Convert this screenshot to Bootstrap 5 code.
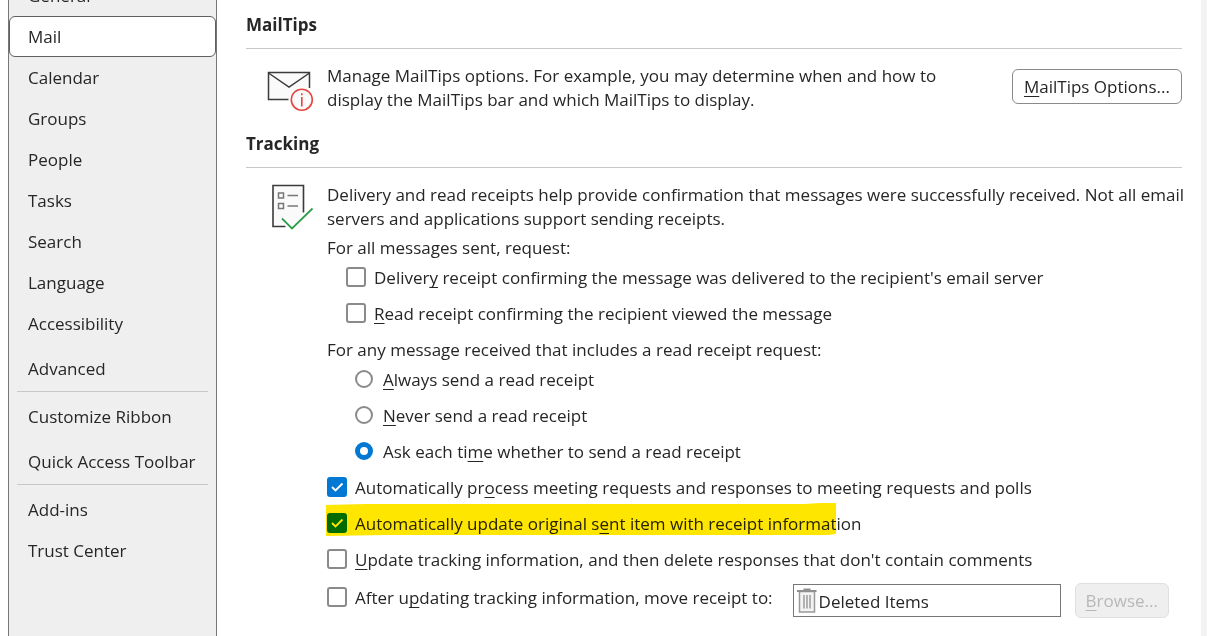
<!DOCTYPE html>
<html lang="en">
<head>
<meta charset="utf-8">
<meta name="viewport" content="width=device-width, initial-scale=1">
<title>Outlook Options</title>
<link href="https://cdn.jsdelivr.net/npm/bootstrap@5.3.0/dist/css/bootstrap.min.css" rel="stylesheet">
<style>
  body { font-family: "Open Sans", "Noto Sans", sans-serif; font-size: 17px; line-height: 24px; color: #262626; background: #fff; }
  u { text-decoration-thickness: 1px; text-underline-offset: 3px; text-decoration-skip-ink: none; }
  .options-dialog { height: 100vh; border-right: 6px solid #f3f3f3; }
  .side-menu { width: 209px; margin-left: 8px; background: #efefef; border: solid #777; border-width: 0 1px; }
  .side-menu .nav { margin-top: -25px; }
  .side-menu .nav-link { height: 41px; padding: 8px 18px 7px; border: 1px solid transparent; border-radius: 6px; color: #262626; white-space: nowrap; }
  .side-menu .nav-link.active { background: #fff; border-color: #606060; }
  .side-menu hr { margin: 2px 8px 4px; border-color: #c8c8c8; opacity: 1; }
  .option-pane { min-width: 0; padding: 0 19px 0 29px; }
  .group-title { font-size: 17px; font-weight: 700; line-height: 24px; margin: 0; padding: 13px 0 11px; border-bottom: 1px solid #c8c8c8; }
  .group-title.second { padding-top: 18px; }
  .group-body { padding-top: 15px; }
  .group-icon { width: 81px; padding-left: 20px; }
  .group-text { min-width: 0; }
  .intro { margin-bottom: 5px; white-space: nowrap; }
  .check-set { padding-left: 19px; }
  .sub-heading { padding-top: 6px; }
  .option-row { min-height: 36px; padding: 0; margin: 0; gap: 8px; }
  .option-row .form-check-input { width: 20px; height: 20px; margin: 0 0 2px; border: 2px solid #8a8a8a; border-radius: 3px; float: none; background-color: #fff; }
  .option-row .form-check-input[type=radio] { width: 18px; height: 18px; border-radius: 50%; }
  .option-row .form-check-input:checked { border-color: #0078d4; background-color: #0078d4; }
  .option-row .form-check-input[type=checkbox]:checked { background-image: url("data:image/svg+xml,%3csvg xmlns='http://www.w3.org/2000/svg' viewBox='0 0 16 16'%3e%3cpath fill='none' stroke='%23fff' stroke-width='1.9' d='M3 8l3.500 3.500L13.500 4.500'/%3e%3c/svg%3e"); background-size: 16px; }
  .option-row .form-check-input[type=radio]:checked { background: #fff; border-width: 5px; }
  .radio-set { padding-left: 28px; }
  .radio-set .option-row { gap: 10px; }
  .marked { position: relative; }
  .marker { position: absolute; left: -1px; top: -4px; width: 510px; height: 35px; mix-blend-mode: multiply; pointer-events: none; }
  .dialog-btn { height: 35px; padding: 0 11px; font-size: 17px; line-height: 24px; color: #262626; background: #fff; border: 1px solid #8a8a8a; border-radius: 6px; white-space: nowrap; }
  .dialog-btn:disabled { padding: 0 10px; color: #b8b8b8; background: #efefef; border-color: #e0e0e0; opacity: 1; }
  .btn-holder { padding-top: 5px; }
  .move-row { padding-top: 5px; gap: 14px; }
  .move-row .option-row { min-height: 30px; margin-right: 6px; }
  .folder-box { width: 268px; height: 33px; margin-top: 1px; border: 1px solid #777; padding-left: 3px; }
  .folder-box input { border: 0; padding: 2px 0 0 2px; min-width: 0; color: #262626; background: transparent; outline: 0; }
</style>
</head>
<body>
<div class="options-dialog d-flex overflow-hidden">
  <aside class="side-menu flex-shrink-0">
    <nav class="nav flex-column flex-nowrap" aria-label="Options">
      <a class="nav-link" href="#">General</a>
      <a class="nav-link active" href="#" aria-current="page">Mail</a>
      <a class="nav-link" href="#">Calendar</a>
      <a class="nav-link" href="#">Groups</a>
      <a class="nav-link" href="#">People</a>
      <a class="nav-link" href="#">Tasks</a>
      <a class="nav-link" href="#">Search</a>
      <a class="nav-link" href="#">Language</a>
      <a class="nav-link" href="#">Accessibility</a>
      <a class="nav-link mt-1" href="#">Advanced</a>
      <hr>
      <a class="nav-link" href="#">Customize Ribbon</a>
      <a class="nav-link mt-1" href="#">Quick Access Toolbar</a>
      <hr>
      <a class="nav-link" href="#">Add-ins</a>
      <a class="nav-link" href="#">Trust Center</a>
    </nav>
  </aside>
  <main class="option-pane flex-grow-1">
    <section>
      <h2 class="group-title">MailTips</h2>
      <div class="group-body d-flex">
        <div class="group-icon flex-shrink-0">
          <svg class="d-block" width="50" height="50" viewBox="0 0 50 50" fill="none" aria-hidden="true">
            <path d="M2.5 9h41v27h-41z" fill="#fafafa"/>
            <path d="M22.500 35.500h-20v-27h41v15.500" stroke="#3b3b3b" stroke-width="1.500"/>
            <path d="M2.500 9 23 23 43.500 9" stroke="#3b3b3b" stroke-width="1.500"/>
            <circle cx="35.800" cy="35.700" r="12.500" fill="#fff"/>
            <circle cx="35.800" cy="35.700" r="10.500" fill="#fafafa" stroke="#e8433f" stroke-width="1.600"/>
            <path d="M35.800 33v9.500M35.800 29.200v2" stroke="#e8433f" stroke-width="1.600"/>
          </svg>
        </div>
        <div class="group-text flex-grow-1">Manage MailTips options. For example, you may determine when and how to<br>display the MailTips bar and which MailTips to display.</div>
        <div class="btn-holder flex-shrink-0"><button type="button" class="btn dialog-btn"><u>M</u>ailTips Options...</button></div>
      </div>
    </section>
    <section>
      <h2 class="group-title second">Tracking</h2>
      <div class="group-body d-flex">
        <div class="group-icon flex-shrink-0">
          <svg class="d-block" width="50" height="50" viewBox="0 0 50 50" fill="none" aria-hidden="true">
            <path d="M7 3h30v41H7z" fill="#fafafa"/>
            <path d="M19.500 43.500H7v-41h30.500v27" stroke="#3b3b3b" stroke-width="1.600"/>
            <path d="M12.500 10h5v5h-5zM12.500 20.500h5v5h-5zM21.500 12.500H32M21.500 23H32" stroke="#777" stroke-width="1.500"/>
            <path d="M16 35.500 26 45.500 46.500 25.500" stroke="#fff" stroke-width="5"/>
            <path d="M16 35.500 26 45.500 46.500 25.500" stroke="#2f9e4b" stroke-width="1.800"/>
          </svg>
        </div>
        <div class="group-text flex-grow-1">
          <div class="intro">Delivery and read receipts help provide confirmation that messages were successfully received. Not all email<br>servers and applications support sending receipts.</div>
          <div>For all messages sent, request:</div>
          <div class="check-set">
            <div class="form-check option-row d-flex align-items-center"><input class="form-check-input" type="checkbox" id="delivery"><label for="delivery">Deliver<u>y</u> receipt confirming the message was delivered to the recipient's email server</label></div>
            <div class="form-check option-row d-flex align-items-center"><input class="form-check-input" type="checkbox" id="read"><label for="read"><u>R</u>ead receipt confirming the recipient viewed the message</label></div>
          </div>
          <div class="sub-heading">For any message received that includes a read receipt request:</div>
          <div class="radio-set">
            <div class="form-check option-row d-flex align-items-center"><input class="form-check-input" type="radio" name="reply" id="always"><label for="always"><u>A</u>lways send a read receipt</label></div>
            <div class="form-check option-row d-flex align-items-center"><input class="form-check-input" type="radio" name="reply" id="never"><label for="never"><u>N</u>ever send a read receipt</label></div>
            <div class="form-check option-row d-flex align-items-center"><input class="form-check-input" type="radio" name="reply" id="ask" checked><label for="ask">Ask each ti<u>m</u>e whether to send a read receipt</label></div>
          </div>
          <div class="form-check option-row d-flex align-items-center"><input class="form-check-input" type="checkbox" id="process" checked><label for="process">Automatically pr<u>o</u>cess meeting requests and responses to meeting requests and polls</label></div>
          <div class="form-check option-row d-flex align-items-center marked"><input class="form-check-input" type="checkbox" id="update" checked><label for="update">Automatically update original s<u>e</u>nt item with receipt information</label>
            <svg class="marker" viewBox="0 0 510 35" preserveAspectRatio="none" aria-hidden="true"><path d="M0 3 40 2 478 2 495 1H510V32L502 33H60L0 34Z" fill="#ffe600"/></svg>
          </div>
          <div class="form-check option-row d-flex align-items-center"><input class="form-check-input" type="checkbox" id="remove"><label for="remove"><u>U</u>pdate tracking information, and then delete responses that don't contain comments</label></div>
          <div class="move-row d-flex align-items-start">
            <div class="form-check option-row d-flex align-items-center"><input class="form-check-input" type="checkbox" id="move"><label for="move">After u<u>p</u>dating tracking information, move receipt to:</label></div>
            <div class="folder-box d-flex align-items-center">
              <svg class="flex-shrink-0" width="20" height="26" viewBox="0 0 20 26" fill="none" aria-hidden="true">
                <path d="M2.500 3.500h15V24h-15z" fill="#f3f3f3" stroke="#9a9a9a" stroke-width="1.500"/>
                <path d="M0 3h19.500M6.500 1.500h7" stroke="#8f8f8f" stroke-width="2"/>
                <path d="M7 7v13.500M10 7v13.500M13 7v13.500" stroke="#8f8f8f" stroke-width="1.300"/>
              </svg>
              <input class="w-100" type="text" value="Deleted Items" aria-label="Destination folder" readonly>
            </div>
            <button type="button" class="btn dialog-btn" disabled><u>B</u>rowse...</button>
          </div>
        </div>
      </div>
    </section>
  </main>
</div>
<script src="https://cdn.jsdelivr.net/npm/bootstrap@5.3.0/dist/js/bootstrap.bundle.min.js"></script>
</body>
</html>
